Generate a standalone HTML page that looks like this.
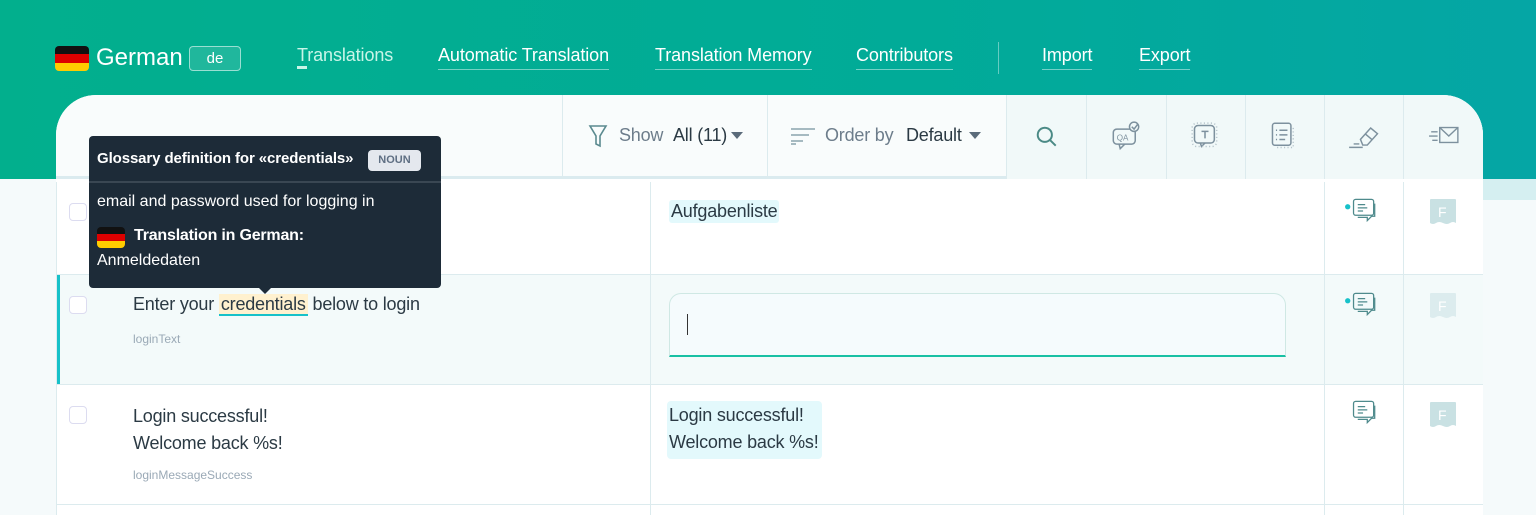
<!DOCTYPE html>
<html><head><meta charset="utf-8"><style>
*{margin:0;padding:0;box-sizing:border-box}
body{width:1536px;height:506px;overflow:hidden;position:relative;background:#f5fafb;font-family:"Liberation Sans",sans-serif;color:#2b3a44}
.abs{position:absolute}
.hdr{left:0;top:0;width:1536px;height:179px;background:linear-gradient(90deg,#02af8d 0%,#01ab98 60%,#05a6a5 100%)}
.band{left:1483px;top:179px;width:53px;height:21px;background:#d5eff1}
.nav{top:45px;font-size:18px;color:#fff;letter-spacing:-0.1px;padding-bottom:3px;border-bottom:1px solid rgba(255,255,255,.45)}
.card{left:56px;top:95px;width:1427px;height:420px;background:#fff;border-radius:40px 40px 0 0;overflow:hidden}
.toolbar{left:0;top:0;width:1427px;height:84px;background:#f9fcfc;border-bottom:3px solid #dbebef}
.vl{width:1px;background:#dcebee}
.hl{height:1px;background:#dcebee}
.icell{top:0;height:84px;background:#f1f9f9}
.txt{font-size:18px;color:#2b3a44;letter-spacing:-0.2px}
.key{font-size:12px;color:#9aa9b6}
.cb{width:18px;height:18px;border:1px solid #dcdcf0;border-radius:4px;background:#fff}
.hl2{background:#e3f9fc;padding:2px 0;border-radius:3px}
.tip{left:89px;top:136px;width:352px;height:152px;background:#1d2b38;border-radius:4px;color:#fff}
.flag{width:34px;height:24px;border-radius:4px;overflow:hidden}
.flag div{height:33.4%}
</style></head><body>
<div class="abs hdr"></div>
<div class="abs band"></div>

<div class="abs flag" style="left:55px;top:46px;width:34px;height:25px"><div style="background:#111"></div><div style="background:#dd0000"></div><div style="background:#ffcc00"></div></div>
<div class="abs" style="left:96px;top:44px;font-size:24px;color:#fff;letter-spacing:0px">German</div>
<div class="abs" style="left:189px;top:46px;width:52px;height:25px;border:1px solid rgba(255,255,255,.55);border-radius:4px;background:rgba(255,255,255,.12);color:#fff;font-size:15px;text-align:center;line-height:23px">de</div>

<div class="abs nav" style="left:297px;border:none;color:#c9f5e8">Translations</div>
<div class="abs" style="left:297px;top:66px;width:10px;height:3px;background:#c9f5e8"></div>
<div class="abs nav" style="left:438px">Automatic Translation</div>
<div class="abs nav" style="left:655px">Translation Memory</div>
<div class="abs nav" style="left:856px">Contributors</div>
<div class="abs" style="left:998px;top:42px;width:1px;height:32px;background:rgba(255,255,255,.4)"></div>
<div class="abs nav" style="left:1042px">Import</div>
<div class="abs nav" style="left:1139px">Export</div>

<div class="abs card">
 <div class="abs toolbar"></div>
 <div class="abs icell" style="left:950px;width:477px"></div>
 <div class="abs vl" style="left:506px;top:0;height:84px"></div>
 <div class="abs vl" style="left:711px;top:0;height:84px"></div>
 <div class="abs vl" style="left:950px;top:0;height:84px"></div>
 <div class="abs vl" style="left:1030px;top:0;height:84px"></div>
 <div class="abs vl" style="left:1110px;top:0;height:84px"></div>
 <div class="abs vl" style="left:1189px;top:0;height:84px"></div>
 <div class="abs vl" style="left:1268px;top:0;height:84px"></div>
 <div class="abs vl" style="left:1347px;top:0;height:84px"></div>

 <svg class="abs" style="left:532px;top:28px" width="20" height="26" viewBox="0 0 20 26" fill="none" stroke="#5b8a8f" stroke-width="1.6"><path d="M2 3h16l-6 10v10l-4-2v-8z"/></svg>
 <div class="abs txt" style="left:563px;top:30px;color:#6d7d8b">Show</div>
 <div class="abs txt" style="left:617px;top:30px">All (11)</div>
 <div class="abs" style="left:675px;top:37px;border:6px solid transparent;border-top:7px solid #5b6b7a"></div>
 <svg class="abs" style="left:734px;top:32px" width="26" height="18" viewBox="0 0 26 18" stroke="#8aa4ad" stroke-width="1.5"><path d="M1 2h24M1 8h18M1 14h12M1 17h5"/></svg>
 <div class="abs txt" style="left:769px;top:30px;color:#6d7d8b">Order by</div>
 <div class="abs txt" style="left:850px;top:30px">Default</div>
 <div class="abs" style="left:913px;top:37px;border:6px solid transparent;border-top:7px solid #5b6b7a"></div>
 <svg class="abs" style="left:979px;top:30px" width="24" height="24" viewBox="0 0 22 22" fill="none" stroke="#4b8a86" stroke-width="1.8"><circle cx="9" cy="9" r="6.5"/><path d="M14 14l5 5"/></svg>
 <svg class="abs" style="left:1055px;top:26px" width="30" height="30" viewBox="0 0 26 26" fill="none" stroke="#7d919e" stroke-width="1.3"><rect x="2" y="7" width="19" height="13" rx="3"/><path d="M7 20l1 4 4-4"/><text x="5" y="17" font-size="7" fill="#7d919e" stroke="none" font-family="Liberation Sans">QA</text><circle cx="20" cy="5" r="4" fill="#f1f9f9"/><path d="M18 5l2 2 3-4"/></svg>
 <svg class="abs" style="left:1135px;top:27px" width="28" height="28" viewBox="0 0 24 24" fill="none" stroke="#7d919e" stroke-width="1.3"><rect x="3" y="3" width="17" height="15" rx="3"/><path d="M8 18l1 3 3-3"/><path d="M9 8h6M12 8v6"/><rect x="1" y="1" width="21" height="20" rx="4" stroke-dasharray="1 2" stroke="#b8c6cd"/></svg>
 <svg class="abs" style="left:1214px;top:26px" width="28" height="30" viewBox="0 0 24 26" fill="none" stroke="#7d919e" stroke-width="1.3"><rect x="2" y="2" width="16" height="19" rx="2"/><path d="M5 8h1M8 8h7M5 12h1M8 12h7M5 16h1M8 16h5"/><path d="M20 6v17H6" stroke-dasharray="1 2" stroke="#b8c6cd"/></svg>
 <svg class="abs" style="left:1292px;top:28px" width="34" height="26" viewBox="0 0 30 22" fill="none" stroke="#7d919e" stroke-width="1.3"><path d="M11 14l9-10 6 5-9 10h-4z"/><path d="M15 9l6 5"/><path d="M1 21h12M5 18h5"/></svg>
 <svg class="abs" style="left:1372px;top:30px" width="32" height="20" viewBox="0 0 30 18" fill="none" stroke="#7d919e" stroke-width="1.3"><rect x="11" y="2" width="17" height="14"/><path d="M11 2l8.5 8 8.5-8"/><path d="M3 6h6M1 10h8M4 14h5"/></svg>

 <div class="abs" style="left:0;top:179px;width:1427px;height:110px;background:#f3fafa"></div>
 <div class="abs" style="left:0;top:179px;width:4px;height:110px;background:#17c1c9"></div>
 <div class="abs hl" style="left:0;top:179px;width:1427px"></div>
 <div class="abs hl" style="left:0;top:289px;width:1427px"></div>
 <div class="abs hl" style="left:0;top:409px;width:1427px"></div>
 <div class="abs vl" style="left:594px;top:87px;height:333px"></div>
 <div class="abs vl" style="left:1268px;top:87px;height:333px"></div>
 <div class="abs vl" style="left:1347px;top:87px;height:333px"></div>
 <div class="abs vl" style="left:0;top:87px;height:333px"></div>

 <div class="abs cb" style="left:13px;top:108px"></div>
 <div class="abs cb" style="left:13px;top:201px"></div>
 <div class="abs cb" style="left:13px;top:311px"></div>

 <div class="abs txt hl2" style="left:613px;top:105px;padding:1px 2px">Aufgabenliste</div>

 <div class="abs txt" style="left:77px;top:199px">Enter your <span style="background:#fff1cf;border-bottom:2px solid #17c1c9;padding:0 2px">credentials</span> below to login</div>
 <div class="abs key" style="left:77px;top:237px">loginText</div>
 <div class="abs" style="left:613px;top:198px;width:617px;height:64px;border:1px solid #cfe8e4;border-bottom:2px solid #19c0a4;border-radius:12px 12px 0 0;background:#f5fbfd"></div>
 <div class="abs" style="left:631px;top:219px;width:1px;height:21px;background:#333"></div>

 <div class="abs txt" style="left:77px;top:308px;line-height:27px">Login successful!<br>Welcome back %s!</div>
 <div class="abs key" style="left:77px;top:373px">loginMessageSuccess</div>
 <div class="abs txt" style="left:611px;top:306px;line-height:27px;background:#e3f9fc;padding:1px 3px 3px 2px;border-radius:4px">Login successful!<br>Welcome back %s!</div>

 <svg class="abs" style="left:1288px;top:102px" width="36" height="28" viewBox="0 0 34 26" fill="none" stroke="#4e8a8c" stroke-width="1.2"><circle cx="3.5" cy="9" r="2.5" fill="#17c1c9" stroke="none"/><rect x="9" y="2" width="19" height="15" rx="2"/><path d="M13 7h7M13 10h9M13 13h5"/><path d="M29 6v12h-3l-4 4v-3h-9"/></svg>
 <svg class="abs" style="left:1288px;top:196px" width="36" height="28" viewBox="0 0 34 26" fill="none" stroke="#4e8a8c" stroke-width="1.2"><circle cx="3.5" cy="9" r="2.5" fill="#17c1c9" stroke="none"/><rect x="9" y="2" width="19" height="15" rx="2"/><path d="M13 7h7M13 10h9M13 13h5"/><path d="M29 6v12h-3l-4 4v-3h-9"/></svg>
 <svg class="abs" style="left:1288px;top:304px" width="36" height="28" viewBox="0 0 34 26" fill="none" stroke="#4e8a8c" stroke-width="1.2"><rect x="9" y="2" width="19" height="15" rx="2"/><path d="M13 7h7M13 10h9M13 13h5"/><path d="M29 6v12h-3l-4 4v-3h-9"/></svg>
 <svg class="abs" style="left:1373px;top:103px" width="28" height="28" viewBox="0 0 28 28"><path d="M1 2q0-1 1-1h24q1 0 1 1v23q-3-2-6 0-3 2-7 0-4-2-7 0-3 2-6 0z" fill="#c9e1e3"/><text x="9" y="19" font-size="14" fill="#fff" font-family="Liberation Sans">F</text></svg>
 <svg class="abs" style="left:1373px;top:197px" width="28" height="28" viewBox="0 0 28 28"><path d="M1 2q0-1 1-1h24q1 0 1 1v23q-3-2-6 0-3 2-7 0-4-2-7 0-3 2-6 0z" fill="#dcecee"/><text x="9" y="19" font-size="14" fill="#fff" font-family="Liberation Sans">F</text></svg>
 <svg class="abs" style="left:1373px;top:306px" width="28" height="28" viewBox="0 0 28 28"><path d="M1 2q0-1 1-1h24q1 0 1 1v23q-3-2-6 0-3 2-7 0-4-2-7 0-3 2-6 0z" fill="#c9e1e3"/><text x="9" y="19" font-size="14" fill="#fff" font-family="Liberation Sans">F</text></svg>
</div>

<div class="abs tip">
 <div class="abs" style="left:8px;top:14px;font-size:15px;font-weight:bold;letter-spacing:-0.1px">Glossary definition for «credentials»</div>
 <div class="abs" style="left:279px;top:14px;width:53px;height:21px;background:#e4e8ee;border-radius:4px;color:#5f6f83;font-size:11px;font-weight:bold;text-align:center;line-height:21px">NOUN</div>
 <div class="abs" style="left:0;top:45px;width:352px;height:2px;background:#3a4753"></div>
 <div class="abs" style="left:8px;top:57px;font-size:16px;letter-spacing:0px">email and password used for logging in</div>
 <div class="abs flag" style="left:8px;top:91px;width:28px;height:21px"><div style="background:#111"></div><div style="background:#dd0000"></div><div style="background:#ffcc00"></div></div>
 <div class="abs" style="left:45px;top:91px;font-size:16px;font-weight:bold;letter-spacing:-0.2px">Translation in German:</div>
 <div class="abs" style="left:8px;top:116px;font-size:16px">Anmeldedaten</div>
 <div class="abs" style="left:170px;top:152px;border:6px solid transparent;border-top:6px solid #1d2b38"></div>
</div>
</body></html>
